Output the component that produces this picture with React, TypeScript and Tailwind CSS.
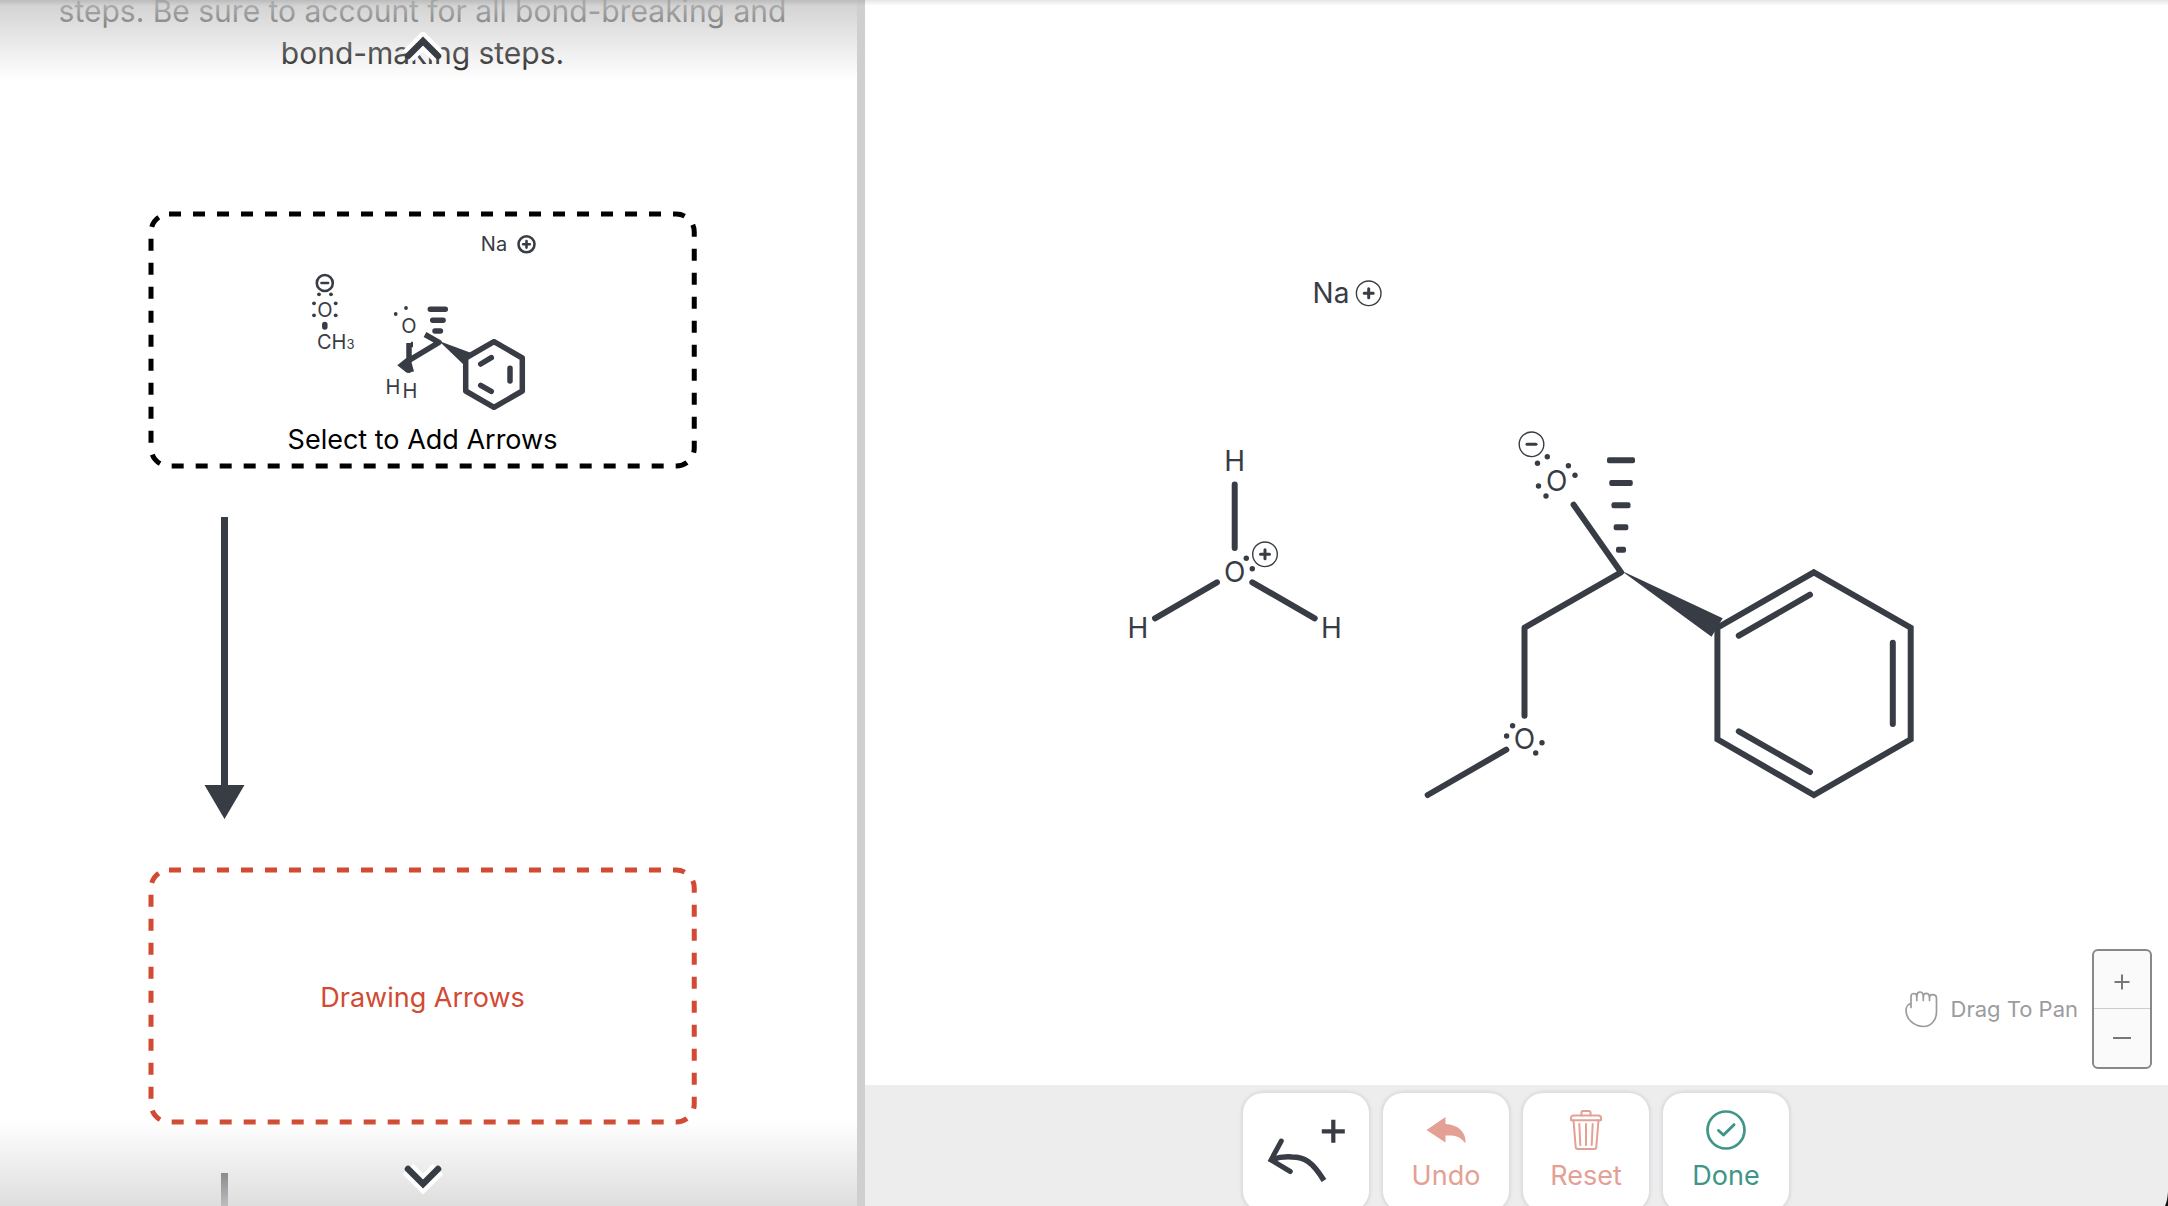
import React, { useState } from 'react';

const INK = '#383c44';

type Point = [number, number];

const Dots: React.FC<{ points: Point[]; r: number }> = ({ points, r }) => (
  <g fill={INK}>
    {points.map(([x, y]) => (
      <circle key={`${x}-${y}`} cx={x} cy={y} r={r} />
    ))}
  </g>
);

interface ChargeProps {
  x: number;
  y: number;
  sign: '+' | '-';
  small?: boolean;
}

const Charge: React.FC<ChargeProps> = ({ x, y, sign, small }) => {
  const r = small ? 8 : 12.3;
  const arm = small ? 3.3 : 4.5;
  return (
    <g fill="none" stroke={INK} strokeLinecap="round">
      <circle cx={x} cy={y} r={r} strokeWidth={small ? 2.6 : 1.4} />
      <path
        d={`M${x - arm} ${y}h${arm * 2}${sign === '+' ? `M${x} ${y - arm}v${arm * 2}` : ''}`}
        strokeWidth={small ? 2.6 : 3}
      />
    </g>
  );
};

// Reactants shown inside the first step box
const ReactantsPreview: React.FC = () => (
  <svg viewBox="298 230 250 180" className="h-[180px] w-[250px]" role="img" aria-label="Reactants">
    <g fill={INK} fontFamily="Inter, sans-serif" fontSize="20" textAnchor="middle">
      <text x="494" y="251">Na</text>
      <text x="325" y="317">O</text>
      <text x="317" y="349" textAnchor="start">CH<tspan fontSize="13">3</tspan></text>
      <text x="409" y="333">O</text>
      <text x="393" y="394">H</text>
      <text x="410" y="398">H</text>
    </g>
    <Charge x={526.5} y={244.3} sign="+" small />
    <Charge x={324.8} y={283} sign="-" small />
    <Dots r={1.9} points={[[319, 294.3], [331, 294.3], [314, 303.3], [314, 315.3], [335.7, 303.3], [335.7, 315.3], [395.7, 314], [406, 308]]} />
    <g fill="none" stroke={INK} strokeWidth="5.5" strokeLinecap="round">
      <path d="M324.8 324.5v2.5" />
      <path d="M430.3 309.3h15M432.7 320.3h10.4M435 331h5.4" />
      <path d="M480.7 364l10.6-6.3M510 368.3v12.7M480.7 385.3l10.6 6" />
    </g>
    <g fill="none" stroke={INK} strokeWidth="5.5" strokeLinejoin="round">
      <path d="M425 334.5l14 7.9-30 18M409 343v19.5M411 344.500h2" />
      <path d="M494 341.7l28.3 16.3v33l-28.3 16.3-28.3-16.3v-33z" />
    </g>
    <path d="M439 341l31 11.5-6.5 12zM397.3 365.2l9-7.2h4l3.7 13.5-3 .5-1 1-3.3-.2z" fill={INK} />
  </svg>
);

const hashes = [
  { y: 460.3, w: 28 },
  { y: 483, w: 23.5 },
  { y: 505.3, w: 19 },
  { y: 527.3, w: 14.6 },
  { y: 549.7, w: 10 },
];

const MoleculeCanvas: React.FC = () => (
  <svg viewBox="865 0 1303 1085" className="block h-full w-full" role="img" aria-label="Structures on the canvas">
    <g fill={INK} fontFamily="Inter, sans-serif" fontSize="28" textAnchor="middle">
      <text x="1331" y="303">Na</text>
      <text x="1234.7" y="471">H</text>
      <text x="1234.7" y="582">O</text>
      <text x="1138" y="638">H</text>
      <text x="1331.3" y="638">H</text>
      <text x="1556.8" y="491">O</text>
      <text x="1524.5" y="749">O</text>
    </g>
    <Charge x={1368.7} y={293.3} sign="+" />
    <Charge x={1265} y={554.3} sign="+" />
    <Charge x={1531.5} y={444.3} sign="-" />
    <Dots
      r={2.7}
      points={[
        [1246.3, 558.3], [1252.3, 568.7],
        [1547.3, 456.7], [1537.5, 463.3], [1568.4, 465.7], [1575, 475.3], [1538.5, 486], [1546, 496],
        [1512.6, 725.7], [1506.6, 736], [1542, 742.7], [1535.7, 753],
      ]}
    />
    <g fill="none" stroke={INK} strokeWidth="6" strokeLinecap="round" strokeLinejoin="round">
      {/* hydronium */}
      <path d="M1234.7 484.5v63.5M1155 618.3l62-36M1252.3 582.3l62.4 36" />
      {/* alkoxide chain */}
      <path d="M1573.6 504.7l47.4 67.6-96.5 55.4v88M1506.3 749.7l-78.6 45.3" />
      {/* ring */}
      <path d="M1738.8 635.7l71.2-41M1892.8 642.7v81.3M1738.8 731.3l71.2 40.7" />
      <path d="M1813.9 572.3l96.8 55.4v111.6l-96.8 55.7-96.5-55.7v-111.6z" strokeLinejoin="miter" />
    </g>
    <path d="M1621 570.5l101.7 47.8-11.2 18.4z" fill={INK} />
    {hashes.map(h => (
      <rect key={h.y} x={1621 - h.w / 2} y={h.y - 3} width={h.w} height="6" rx="2" fill={INK} />
    ))}
  </svg>
);

interface StepBoxProps {
  color: string;
  className: string;
  children: React.ReactNode;
}

const StepBox: React.FC<StepBoxProps> = ({ color, className, children }) => (
  <button type="button" className={`relative flex h-[258px] w-[65%] shrink-0 flex-col items-center text-[27px] leading-8 ${className}`}>
    <svg className="absolute inset-0 h-full w-full overflow-visible p-[3px]" aria-hidden="true">
      <rect width="100%" height="100%" rx="18" fill="none" stroke={color} strokeWidth="5" strokeDasharray="12 12" />
    </svg>
    {children}
  </button>
);

const StepArrow: React.FC = () => (
  <div className="my-12 w-[65%] shrink-0 pl-14">
    <svg viewBox="0 0 42 302" className="block h-[302px] w-[42px]" aria-hidden="true">
      <path d="M17 0h7v268h16.500l-20 34-20-34h16.500z" fill={INK} />
    </svg>
  </div>
);

const ScrollChevron: React.FC<{ direction: 'up' | 'down' }> = ({ direction }) => {
  const d = direction === 'up' ? 'M9 24 24 9l15 15' : 'M9 9l15 15L39 9';
  return (
    <svg viewBox="0 0 48 34" className="h-[34px] w-12" fill="none" aria-hidden="true">
      <path d={d} stroke="#fff" strokeWidth="15" />
      <path d={d} stroke={INK} strokeWidth="6.500" strokeLinecap="round" />
    </svg>
  );
};

const AddArrowIcon = () => (
  <svg viewBox="1243 1093 126 118" className="h-[118px] w-[126px]" fill="none" stroke={INK} aria-hidden="true">
    <path d="M1324 1180.500C1312 1161 1304 1157 1292 1157c-7-.5-14 .5-20 2.500" strokeWidth="5.500" />
    <path d="M1281.300 1141l-10.300 19 19.300 11.500" strokeWidth="5" strokeLinecap="round" strokeLinejoin="miter" />
    <path d="M1321.800 1131.300h23M1333.300 1119.800v23" strokeWidth="4.200" />
  </svg>
);

const UndoIcon = () => (
  <svg viewBox="0 0 40 40" className="size-10" fill="currentColor" aria-hidden="true">
    <path d="M.5 20 19.500 7v7c12.500.5 20.500 8 20 18.500h-1c-4-6-10-7.500-19-7v7z" />
  </svg>
);

const TrashIcon = () => (
  <svg viewBox="0 0 40 40" className="size-10" fill="none" stroke="currentColor" strokeWidth="2" strokeLinejoin="round" strokeLinecap="round" aria-hidden="true">
    <path d="M15.500 5.500V2.500a1.500 1.500 0 0 1 1.500-1.500h6a1.500 1.500 0 0 1 1.500 1.500v3" />
    <path d="M7.500 5.500h25a2.500 2.500 0 0 1 2.500 2.500v2.200H5V8a2.500 2.500 0 0 1 2.500-2.500z" />
    <path d="M7.500 10.500l2.200 26.300a2.200 2.200 0 0 0 2.200 2.200h16.200a2.200 2.200 0 0 0 2.200-2.200l2.200-26.300" />
    <path d="M13.300 14l1 21M20 14v21M26.700 14l-1 21" />
  </svg>
);

const DoneIcon = () => (
  <svg viewBox="0 0 40 40" className="size-10" fill="none" stroke="currentColor" strokeLinecap="round" strokeLinejoin="round" aria-hidden="true">
    <circle cx="20" cy="20" r="18.500" strokeWidth="2.700" />
    <path d="M12.500 20.500l5 4.500 10.500-10.300" strokeWidth="3" />
  </svg>
);

const HandIcon = () => (
  <svg viewBox="0 0 34 38" className="h-[38px] w-[34px]" fill="none" stroke="currentColor" strokeWidth="1.700" strokeLinecap="round" strokeLinejoin="round" aria-hidden="true">
    <path d="M6 17.500V6.500c0-4 5.800-4 5.800 0 0-6 6.200-6 6.500 0 .5-4.500 6-4 6.200.5.5-3.500 7-3 7 1.200V22c0 8-5.500 14.500-13 14.500C9 36.500 1 29 1 20.500c0-4 2.500-6.500 5-7" />
    <path d="M11.800 6.500v4M18.300 6.500v4M24.500 7v3.500" />
  </svg>
);

const actions = [
  { label: 'Undo', icon: UndoIcon, color: 'text-[#e4a095]' },
  { label: 'Reset', icon: TrashIcon, color: 'text-[#e4a095]' },
  { label: 'Done', icon: DoneIcon, color: 'text-[#3f9587]' },
];

const toolButton = 'h-[118px] w-[126px] shrink-0 rounded-[20px] bg-white shadow-[0_0_3px_2px_#dbdbe0]';

const App: React.FC = () => {
  const [zoom, setZoom] = useState(1);

  return (
    <div className="relative grid h-screen grid-cols-[865fr_1303fr] overflow-hidden bg-white font-['Inter',sans-serif] text-[#383c44]">
      {/* Steps */}
      <aside className="relative min-w-0 overflow-hidden border-r-8 border-[#cfcfcf]">
        <div className="-mt-2.5 flex flex-col items-center pr-3">
          <p className="mb-[137px] max-w-[760px] shrink-0 text-center text-[30px] leading-[42px] text-[#222]">
            steps. Be sure to account for all bond-breaking and bond-making steps.
          </p>
          <StepBox color="#000" className="pt-[19px] text-black">
            <ReactantsPreview />
            <span className="mt-3.5">Select to Add Arrows</span>
          </StepBox>
          <StepArrow />
          <StepBox color="#d24a33" className="justify-center pt-1 text-[#d24a33]">
            <span>Drawing Arrows</span>
          </StepBox>
          <StepArrow />
        </div>

        <button type="button" aria-label="Scroll up" className="absolute inset-x-0 top-0 flex h-20 justify-center bg-linear-to-b from-[#cacacae0] to-[#ffffff00] pt-8 pr-3">
          <ScrollChevron direction="up" />
        </button>
        <button type="button" aria-label="Scroll down" className="absolute inset-x-0 bottom-0 flex h-[86px] items-end justify-center bg-linear-to-t from-[#d7d7d7d4] to-[#ffffff00] pr-3 pb-3">
          <ScrollChevron direction="down" />
        </button>
      </aside>

      {/* Canvas and toolbar */}
      <main className="flex min-h-0 min-w-0 flex-col">
        <div className="relative min-h-0 flex-1">
          <MoleculeCanvas />
          <div className="absolute right-4 bottom-4 flex items-center gap-[14px]">
            <div className="flex items-center gap-3 text-[22px] text-[#9b9ba0]">
              <HandIcon />
              <span>Drag To Pan</span>
            </div>
            <div className="flex h-[120px] w-[60px] flex-col overflow-hidden rounded-md border-2 border-[#888] bg-[#fafafa] text-[#777]">
              <button type="button" aria-label="Zoom in" onClick={() => setZoom(zoom + 1)} className="flex h-1/2 items-center justify-center border-b border-[#ccc] pt-1">
                <svg viewBox="0 0 18 18" className="size-[18px]" stroke="currentColor" strokeWidth="2" aria-hidden="true">
                  <path d="M1.500 9h15M9 1.500v15" />
                </svg>
              </button>
              <button type="button" aria-label="Zoom out" onClick={() => setZoom(zoom - 1)} className="flex h-1/2 items-center justify-center">
                <svg viewBox="0 0 18 18" className="size-[18px]" stroke="currentColor" strokeWidth="2" aria-hidden="true">
                  <path d="M0 9h18" />
                </svg>
              </button>
            </div>
          </div>
        </div>

        <div className="flex h-[121px] shrink-0 justify-center gap-[14px] overflow-hidden bg-[#ededed] pt-2 pr-px">
          <button type="button" aria-label="Add arrow" className={toolButton}>
            <AddArrowIcon />
          </button>
          {actions.map(action => (
            <button key={action.label} type="button" className={`${toolButton} ${action.color} flex flex-col items-center pt-[17px]`}>
              <action.icon />
              <span className="mt-2 text-[27px] leading-9">{action.label}</span>
            </button>
          ))}
        </div>
      </main>

      {/* shadow from the header above */}
      <div className="pointer-events-none absolute inset-x-0 top-0 h-1.5 bg-linear-to-b from-black/10 to-transparent" />
      <svg viewBox="0 0 4 14" className="absolute right-0 bottom-0 h-[14px] w-1" aria-hidden="true">
        <path d="M4 0v14H1C3 10 3.500 5 4 0z" fill="#111" />
      </svg>
    </div>
  );
};

export default App;
